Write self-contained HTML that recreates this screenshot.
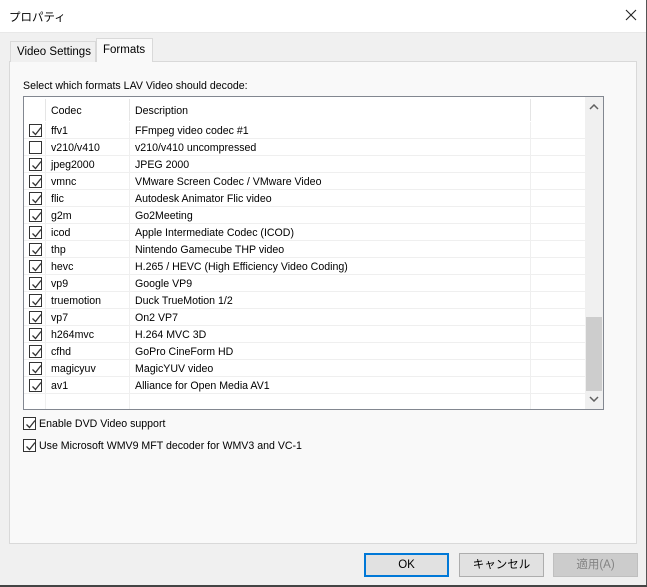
<!DOCTYPE html><html><head><meta charset="utf-8"><style>
*{box-sizing:border-box;margin:0;padding:0}
body{width:647px;height:587px;background:#f0f0f0;font-family:"Liberation Sans","Noto Sans CJK JP",sans-serif;font-size:10.6px;color:#000;position:relative;overflow:hidden}
.a{position:absolute}
.title{left:0;top:0;width:647px;height:33px;background:#fff}
.cb{position:absolute;width:13px;height:13px;border:1px solid #333;background:#fff}
.cb svg{position:absolute;left:1px;top:1px}
.row{position:absolute;left:0;width:561px;height:17px;border-bottom:1px solid #efefef}
.row span{position:absolute;top:3px}
.btn{position:absolute;top:553px;width:85px;height:24px;border:1px solid #adadad;background:#e1e1e1;text-align:center;line-height:22px;font-size:11.5px}
</style></head><body>
<div class="a title"></div>
<div class="a" style="left:9px;top:9px;font-size:11.5px">プロパティ</div>
<svg class="a" style="left:625px;top:9px" width="12" height="12"><path d="M1 1L11 11M11 1L1 11" stroke="#222" stroke-width="1.1"/></svg>
<div class="a" style="left:0;top:32px;width:647px;height:1px;background:#e8e8e8"></div>
<div class="a" style="right:0;top:0;width:1px;height:587px;background:#555"></div>
<div class="a" style="left:0;bottom:0;width:647px;height:2px;background:#444"></div>
<div class="a" style="left:9px;top:61px;width:628px;height:483px;border:1px solid #d9d9d9;background:#f9f9f9"></div>
<div class="a" style="left:10px;top:41px;width:86px;height:21px;border:1px solid #d9d9d9;border-bottom:none;background:#f0f0f0;padding:4px 0 0 6px;font-size:11.5px">Video Settings</div>
<div class="a" style="left:96px;top:38px;width:57px;height:24px;border:1px solid #d9d9d9;border-bottom:none;background:#f9f9f9;padding:5px 0 0 6px;font-size:11.5px">Formats</div>
<div class="a" style="left:23px;top:80px">Select which formats LAV Video should decode:</div>
<div class="a" style="left:23px;top:96px;width:581px;height:314px;border:1px solid #828790;background:#fff;overflow:hidden">
 <div class="a" style="left:21px;top:2px;width:1px;height:22px;background:#e5e5e5"></div>
 <div class="a" style="left:105px;top:2px;width:1px;height:22px;background:#e5e5e5"></div>
 <div class="a" style="left:506px;top:2px;width:1px;height:22px;background:#e5e5e5"></div>
 <div class="a" style="left:27px;top:8px">Codec</div>
 <div class="a" style="left:111px;top:8px">Description</div>
 <div class="a" style="left:21px;top:25px;width:1px;height:290px;background:#efefef"></div>
 <div class="a" style="left:105px;top:25px;width:1px;height:290px;background:#efefef"></div>
 <div class="a" style="left:506px;top:25px;width:1px;height:290px;background:#efefef"></div>
 <div id="rows"></div>
 <div class="a" style="left:561px;top:0;width:18px;height:312px;background:#f0f0f0"></div>
 <div class="a" style="left:562px;top:220px;width:16px;height:74px;background:#cdcdcd"></div>
 <svg class="a" style="left:565px;top:7px" width="10" height="6"><path d="M1 5L5 1L9 5" stroke="#606060" stroke-width="1.5" fill="none"/></svg>
 <svg class="a" style="left:565px;top:299px" width="10" height="6"><path d="M1 1L5 5L9 1" stroke="#606060" stroke-width="1.5" fill="none"/></svg>
</div>
<div class="cb" style="left:23px;top:417px"><svg width="11" height="11"><path d="M1.5 5.5l3 3 5.5-7" stroke="#333" stroke-width="1.3" fill="none"/></svg></div>
<div class="a" style="left:39px;top:418px">Enable DVD Video support</div>
<div class="cb" style="left:23px;top:439px"><svg width="11" height="11"><path d="M1.5 5.5l3 3 5.5-7" stroke="#333" stroke-width="1.3" fill="none"/></svg></div>
<div class="a" style="left:39px;top:440px">Use Microsoft WMV9 MFT decoder for WMV3 and VC-1</div>
<div class="btn" style="left:364px;border:2px solid #0078d7;line-height:20px">OK</div>
<div class="btn" style="left:459px">キャンセル</div>
<div class="btn" style="left:553px;color:#838383;background:#cccccc;border-color:#bfbfbf">適用(A)</div>
<script>
var d=[["ffv1","FFmpeg video codec #1",1],["v210/v410","v210/v410 uncompressed",0],["jpeg2000","JPEG 2000",1],["vmnc","VMware Screen Codec / VMware Video",1],["flic","Autodesk Animator Flic video",1],["g2m","Go2Meeting",1],["icod","Apple Intermediate Codec (ICOD)",1],["thp","Nintendo Gamecube THP video",1],["hevc","H.265 / HEVC (High Efficiency Video Coding)",1],["vp9","Google VP9",1],["truemotion","Duck TrueMotion 1/2",1],["vp7","On2 VP7",1],["h264mvc","H.264 MVC 3D",1],["cfhd","GoPro CineForm HD",1],["magicyuv","MagicYUV video",1],["av1","Alliance for Open Media AV1",1],["","",-1]];
var h="";d.forEach(function(r,i){var t=25+i*17;h+='<div class="row" style="top:'+t+'px">';if(r[2]>=0){h+='<div class="cb" style="left:5px;top:2px">'+(r[2]?'<svg width="11" height="11"><path d="M1.5 5.5l3 3 5.5-7" stroke="#333" stroke-width="1.3" fill="none"/></svg>':'')+'</div><span style="left:27px">'+r[0]+'</span><span style="left:111px">'+r[1]+'</span>';}h+='</div>';});
document.getElementById("rows").innerHTML=h;
</script>
</body></html>
